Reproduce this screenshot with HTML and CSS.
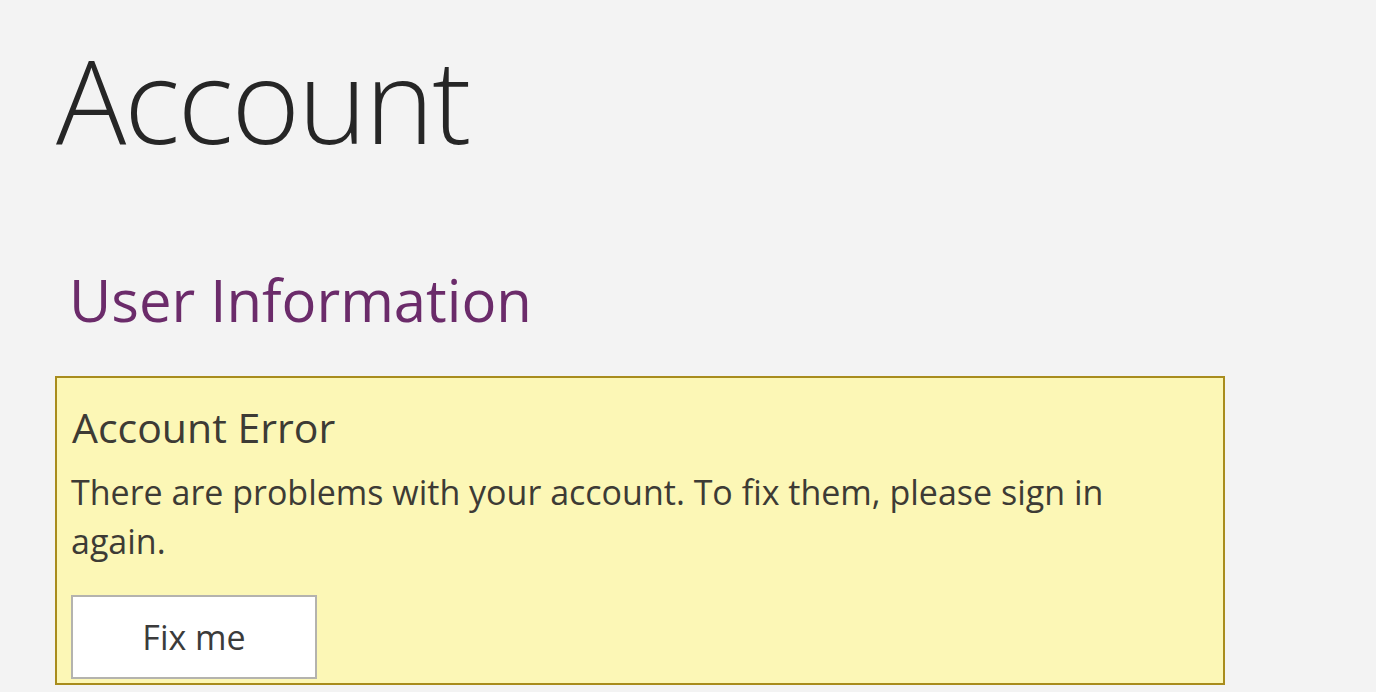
FILE: index.html
```html
<!DOCTYPE html>
<html>
<head>
<meta charset="utf-8">
<link rel="stylesheet" href="styles.css">
</head>
<body>
<div class="page">
  <h1 class="title">Account</h1>
  <h2 class="section">User Information</h2>
  <div class="alert">
    <div class="alert-title">Account Error</div>
    <p class="alert-text">There are problems with your account. To fix them, please sign in again.</p>
    <button class="btn">Fix me</button>
  </div>
</div>
</body>
</html>
```
FILE: styles.css
```css
html, body {
  margin: 0;
  padding: 0;
  background: #f3f3f3;
  font-family: "Open Sans", "Noto Sans", sans-serif;
  overflow: hidden;
}
.page {
  padding: 19px 0 0 55px;
}
.title {
  margin: 0 0 0 1px;
  font-size: 117px;
  font-weight: 300;
  line-height: 160px;
  color: #262626;
  letter-spacing: -2px;
}
.section {
  margin: 81px 0 0 14px;
  font-size: 58px;
  font-weight: 400;
  line-height: 80px;
  color: #6b2b6a;
}
.alert {
  margin-top: 36px;
  width: 1152px;
  box-sizing: content-box;
  border: 2px solid #a88c1d;
  background: #fcf7b6;
  padding: 21px 0 4px 14px;
  color: #3d3b35;
}
.alert-title {
  margin-left: 1px;
  font-size: 41px;
  line-height: 56px;
}
.alert-text {
  margin: 13px 0 29px 0;
  width: 1060px;
  font-size: 34px;
  line-height: 49px;
}
.btn {
  display: block;
  width: 246px;
  height: 84px;
  background: #fff;
  border: 2px solid #b4b3ae;
  font-family: inherit;
  font-size: 34px;
  color: #3b3b3b;
  padding: 0;
}
```
